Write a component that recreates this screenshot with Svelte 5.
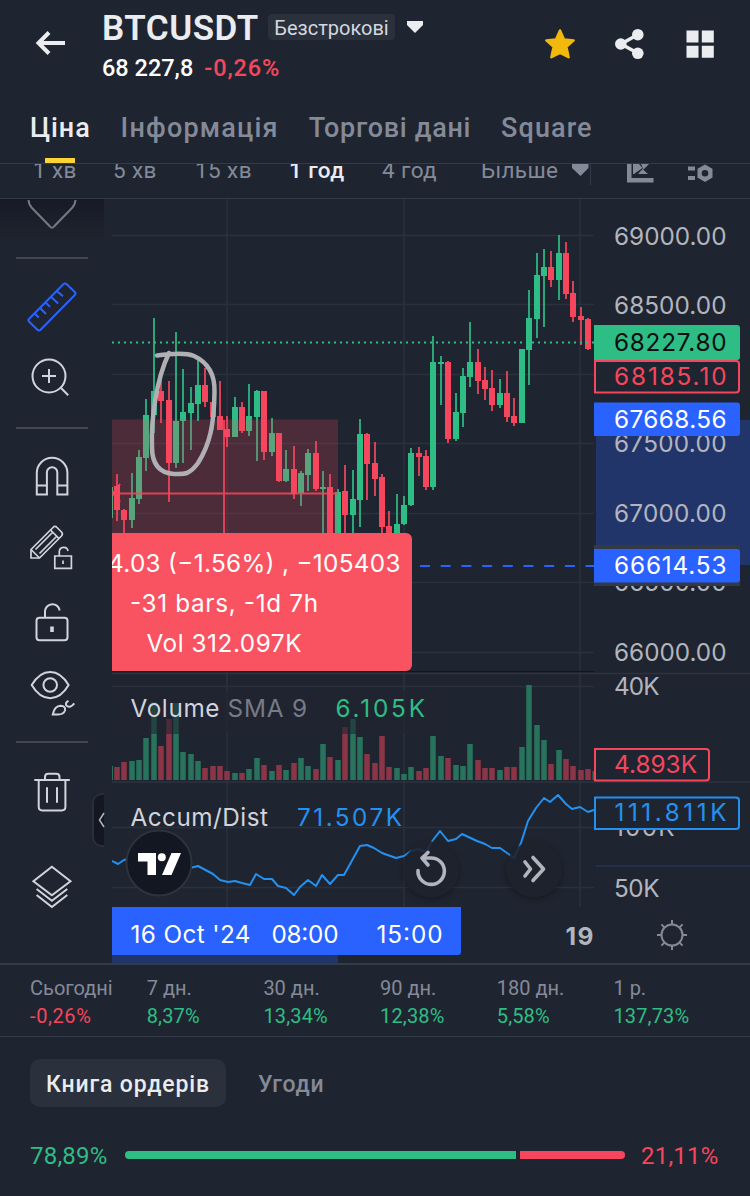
<script lang="ts">
	interface Tool {
		name: string;
		top: number;
		height: number;
		paths: string[];
		divider?: boolean;
	}

	const tabs = [
		{ label: 'Ціна', cls: 't1' },
		{ label: 'Інформація', cls: 't2' },
		{ label: 'Торгові дані', cls: 't3' },
		{ label: 'Square', cls: 't4' }
	];
	const intervals = ['1 хв', '5 хв', '15 хв', '1 год', '4 год'];

	let activeTab = $state('Ціна');
	let activeInterval = $state('1 год');
	let bookTab = $state('book');

	// Each icon is drawn in chart coordinates, top is where its slot starts
	const tools: Tool[] = [
		{
			name: 'scroll', top: 199, height: 58, divider: true,
			paths: ['M28.5 200Q29 205 32 208L50 226.5Q52 229 54 226.5L72 208Q75 205 75.5 200']
		},
		{
			name: 'ruler', top: 259, height: 84,
			paths: [
				'M63.3 284.3Q65 282.8 66.7 284.3L74.8 292Q76.3 293.5 74.8 295L40.6 329.7Q39 331.2 37.4 329.7L29.2 321.8Q27.7 320.3 29.2 318.8Z',
				'M34.8 313.5l4 4M40 308l6 6M45.6 302.5l4.4 4.4M51.2 297l7 6.6M57 291.2l6 5'
			]
		},
		{
			name: 'zoom', top: 343, height: 84, divider: true,
			paths: ['M32.5 376a16.5 16.5 0 1 0 33 0a16.5 16.5 0 1 0-33 0', 'M42 376h14M49 369v14M60.8 387.8l7.4 7.4']
		},
		{
			name: 'magnet', top: 429, height: 83,
			paths: [
				'M36.8 494.5V473a15.3 15.3 0 0 1 30.6 0V494.5H57.3V472.5a5.2 5.2 0 0 0-10.4 0V494.5Z',
				'M36.8 485.5h10M57.3 485.5h10'
			]
		},
		{
			name: 'draw', top: 512, height: 73,
			paths: [
				'M31 549.5L53 527.5Q55 525.5 57 527.5L61.5 532Q63.3 534 61.5 536L39.5 558H31Z',
				'M31 549.5l8.5 8.5M50.5 530l8.8 8.8M35.5 549.5L52.5 532.5M39.5 553.5L56.5 536.5',
				'M54.8 556h16.6v12.4H54.8ZM59.3 556v-4.5a4.4 4.4 0 0 1 8.7-.5M63 560.5v3.5'
			]
		},
		{
			name: 'lock', top: 585, height: 72,
			paths: [
				'M39.5 617.8h25a3 3 0 0 1 3 3v16.5a3 3 0 0 1-3 3h-25a3 3 0 0 1-3-3v-16.5a3 3 0 0 1 3-3Z',
				'M45 617.5V611a7.4 7.4 0 0 1 14.7-.5M51.2 626.5v5.6M52.8 626.5v5.6'
			]
		},
		{
			name: 'hide', top: 657, height: 84, divider: true,
			paths: [
				'M31.7 685C42 667.5 58.5 667.5 68.6 685C58.5 702.5 42 702.5 31.7 685Z',
				'M43.4 685a6.8 6.8 0 1 0 13.6 0a6.8 6.8 0 1 0-13.6 0',
				'M52.8 714.5Q54.5 706 60.5 705.8Q66 706 65 710.5Q63.5 714.5 58 714.5Z',
				'M68.5 700.8q-3.4 1.6-2.3 4.6q3.6 3.6 8.1-2'
			]
		},
		{
			name: 'trash', top: 743, height: 99,
			paths: [
				'M34.3 780h35.5M45 780v-3q0-3.3 3.3-3.3h7.9q3.3 0 3.3 3.3v3',
				'M38.7 780v26.8q0 3.6 3.6 3.6h19.5q3.6 0 3.6-3.6V780M47 787.3v15.4M57 787.3v15.4'
			]
		},
		{
			name: 'layers', top: 842, height: 121,
			paths: [
				'M51.9 866.8L70.5 881.2L51.9 895.2L33.4 881.2Z',
				'M36.6 889L51.9 900.8L67.3 889M36.6 895L51.9 907L67.3 895'
			]
		}
	];

	// colour, high, body top, body bottom, low
	const candles: [string, number, number, number, number][] = [
		['r', 474, 486, 510, 521], ['r', 509, 510, 520, 533], ['g', 473, 498, 520, 528],
		['g', 450, 457, 499, 504], ['g', 399, 415, 458, 471], ['g', 318, 391, 415, 433],
		['r', 378, 391, 401, 423], ['r', 381, 400, 463, 502], ['g', 332, 421, 463, 468],
		['g', 369, 412, 421, 463], ['g', 387, 403, 413, 450], ['g', 360, 385, 404, 421],
		['r', 368, 385, 402, 407], ['r', 400, 402, 417, 430], ['r', 381, 416, 430, 430],
		['r', 416, 429, 437, 447], ['g', 397, 407, 437, 437], ['r', 402, 407, 431, 433],
		['g', 384, 416, 431, 436], ['g', 390, 391, 417, 461], ['r', 391, 391, 452, 460],
		['g', 418, 433, 452, 456], ['r', 433, 433, 481, 482], ['g', 450, 469, 481, 482],
		['r', 446, 469, 494, 499], ['g', 471, 473, 493, 506], ['g', 449, 453, 475, 491],
		['r', 441, 453, 489, 491], ['g', 471, 487, 489, 534], ['r', 474, 487, 534, 534],
		['g', 489, 492, 534, 534], ['r', 465, 491, 515, 534], ['g', 470, 499, 515, 534],
		['g', 419, 434, 500, 527], ['r', 433, 434, 464, 500], ['r', 442, 463, 479, 496],
		['r', 474, 477, 527, 534], ['r', 511, 526, 534, 534], ['g', 494, 524, 534, 534],
		['g', 496, 505, 524, 525], ['g', 448, 453, 505, 506], ['r', 447, 453, 457, 476],
		['r', 450, 456, 487, 490], ['g', 336, 362, 487, 490], ['g', 356, 362, 364, 405],
		['r', 361, 362, 439, 443], ['g', 393, 412, 439, 441], ['g', 368, 376, 413, 427],
		['g', 322, 362, 377, 387], ['r', 349, 362, 381, 394], ['r', 367, 380, 389, 400],
		['r', 370, 388, 405, 411], ['g', 379, 393, 405, 408], ['r', 371, 393, 417, 422],
		['r', 398, 416, 423, 426], ['g', 349, 349, 423, 423], ['g', 290, 318, 350, 385],
		['g', 253, 275, 319, 338], ['g', 249, 267, 276, 327], ['r', 251, 267, 280, 287],
		['g', 235, 253, 280, 300], ['r', 242, 253, 294, 299], ['r', 281, 293, 317, 322],
		['r', 307, 316, 320, 345], ['r', 318, 319, 349, 350]
	];

	const volumeTops = [
		767, 762, 761, 760, 738, 702, 746, 719, 703, 752, 754, 761, 768, 766, 766, 771, 773, 773, 769, 758,
		765, 771, 765, 770, 763, 758, 766, 769, 744, 757, 760, 727, 719, 737, 754, 763, 736, 767, 768, 774,
		767, 771, 768, 736, 756, 758, 765, 766, 744, 760, 768, 768, 770, 767, 767, 747, 685, 725, 740, 764,
		750, 759, 766, 770, 769
	];

	const barX = (i: number) => Math.round(117 + i * 7.36);

	const accum =
		'112,861 118,864 124,860 132,858 150,866 160,872 175,872 190,868 198,866 213,874 220,880 228,882 235,881 242,883 250,885 256,874 264,879 272,879 278,886 286,888 294,895 300,887 308,880 316,886 322,875 330,884 338,875 344,875 360,846 367,845 374,848 382,853 396,858 404,856 411,851 418,849 426,852 433,840 440,831 448,841 456,839 462,834 477,841 485,844 492,848 500,848 514,858 521,843 528,821 536,808 544,798 550,802 558,795 566,804 572,809 580,807 588,812 594,810';

	const gridY = [235, 304, 374, 443, 513, 582, 652, 686, 827, 887];
	const gridX = [227, 404, 580];

	const prices = [
		{ y: 244.5, text: '69000.00' },
		{ y: 313.5, text: '68500.00' },
		{ y: 452, text: '67500.00' },
		{ y: 522, text: '67000.00' },
		{ y: 591, text: '66500.00' },
		{ y: 660.5, text: '66000.00' }
	];

	const stats = [
		{ label: 'Сьогодні', value: '-0,26%' },
		{ label: '7 дн.', value: '8,37%' },
		{ label: '30 дн.', value: '13,34%' },
		{ label: '90 дн.', value: '12,38%' },
		{ label: '180 дн.', value: '5,58%' },
		{ label: '1 р.', value: '137,73%' }
	];

	const buyShare = 78.89;
</script>

<div class="screen">
	<header class="header">
		<svg class="back" width="32" height="28" viewBox="35 29 32 28">
			<path d="M49 32.5L38.5 43L49 53.5M38.5 43H65" fill="none" stroke="#eaecef" stroke-width="4" />
		</svg>
		<div class="pair">
			<div class="pair-row">
				<span class="symbol">BTCUSDT</span>
				<span class="badge">Безстрокові</span>
				<svg class="caret" width="16" height="12" viewBox="0 0 16 12"><path d="M0 0H16V4L8 12L0 4Z" fill="#eaecef" /></svg>
			</div>
			<div class="price-row">
				<span class="last">68 227,8</span>
				<span class="change">-0,26%</span>
			</div>
		</div>
		<svg class="actions" width="170" height="32" viewBox="545 28 170 32">
			<path
				d="M560 30.5L564 39.4L573.6 40.4L566.4 46.8L568.6 57.2L560 52.8L551.4 57.2L553.6 46.8L546.4 40.4L556 39.4Z"
				fill="#f0b90b" stroke="#f0b90b" stroke-width="2.5" stroke-linejoin="round"
			/>
			<g fill="#eaecef" stroke="#eaecef">
				<path d="M638 34.5L621 44L638 53.3" fill="none" stroke-width="3.5" />
				<circle cx="620.8" cy="44" r="5.8" stroke="none" />
				<circle cx="637.8" cy="34.7" r="5.8" stroke="none" />
				<circle cx="637.8" cy="53.3" r="5.8" stroke="none" />
			</g>
			<path d="M686.5 30.5h12v12h-12zM701.8 30.5h12v12h-12zM686.5 45.8h12v12h-12zM701.8 45.8h12v12h-12z" fill="#eaecef" />
		</svg>
	</header>

	<nav class="tabs">
		{#each tabs as tab}
			<button class="tab {tab.cls}" class:active={activeTab === tab.label} onclick={() => (activeTab = tab.label)}>
				{tab.label}
			</button>
		{/each}
	</nav>

	<div class="intervals">
		{#each intervals as item, i}
			<button class="interval i{i}" class:active={activeInterval === item} onclick={() => (activeInterval = item)}>
				{item}
			</button>
		{/each}
		<button class="interval more">Більше</button>
		<svg class="interval-icons" width="142" height="34" viewBox="571 164 142 34">
			<g fill="#848a98">
				<path d="M572 160H588.5V168L580.5 176L572 168Z" />
				<path d="M627 160h4.5v18h22v4.5H627z" />
				<path d="M633 164h6l3.5 4L634 174h-1zM641 164h8l-5.5 5.5zM638 174l4.5-5l5.5 5z" />
				<path d="M688 166.5h7v4h-7zM688 176h7v4h-7z" />
				<path fill-rule="evenodd" d="M705 164.5l7.5 4.2v8.8L705 182l-7.5-4.5v-8.8zM705 170a3.3 3.3 0 1 0 0 6.6a3.3 3.3 0 1 0 0-6.6z" />
			</g>
			<path d="M590.5 164v21" stroke="#333b47" />
		</svg>
	</div>

	<main class="main">
		<aside class="toolbar">
			{#each tools as tool}
				<svg class="tool {tool.name}" width="104" height={tool.height} viewBox="0 {tool.top} 104 {tool.height}">
					{#each tool.paths as d}
						<path {d} />
					{/each}
				</svg>
				{#if tool.divider}
					<div class="divider"></div>
				{/if}
			{/each}
			<button class="collapse" aria-label="Collapse">
				<svg width="8" height="16" viewBox="0 0 8 16"><path d="M7 1L2.5 8L7 15" /></svg>
			</button>
		</aside>

		<svg class="chart" width="646" height="764" viewBox="104 199 646 764">
			<defs>
				<clipPath id="plot"><rect x="112" y="199" width="482" height="764" /></clipPath>
			</defs>

			<g class="grid">
				{#each gridY as y}
					<path d="M112 {y}.5H594" />
				{/each}
				{#each gridX as x}
					<path d="M{x} 199V907" />
				{/each}
			</g>
			<path d="M112 671.5H594" stroke="#11151d" />
			<path d="M112 673.5H750M112 782H750" stroke="#2d333e" stroke-width="1.5" />

			<g clip-path="url(#plot)">
				<rect x="110" y="487" width="3" height="31" fill="#2ebd85" />
				{#each candles as [color, high, top, bottom, low], i}
					<g class={color}>
						<rect class="wick" x={barX(i) - 1} y={high} width="2" height={low - high} />
						<rect x={barX(i) - 3} y={top} width="6" height={Math.max(bottom - top, 2)} />
					</g>
				{/each}
				<g class="volume">
					<rect class="g" x="110" y="766" width="3" height="14" />
					{#each volumeTops as top, i}
						<rect class={candles[i][0]} x={barX(i) - 2.75} y={top} width="5.5" height={780 - top} />
					{/each}
					<rect class="g" x="592.5" y="771" width="2" height="9" />
				</g>
				<rect x="120" y="690" width="315" height="44" fill="#1f2530" opacity="0.6" />
				<path d="M112 342.5H594" stroke="#2ebd85" stroke-width="2" stroke-dasharray="2 4" />

				<!-- measured range -->
				<rect x="112" y="419.5" width="226" height="114" fill="#f6465d" opacity="0.21" />
				<path d="M112 493.5H338M224 420V533" stroke="#f6465d" stroke-width="2" opacity="0.85" />
				<path d="M120 484L113 493.5L120 502" fill="none" stroke="#f6465d" stroke-width="2" />
				<path d="M420 566H594" stroke="#2962ff" stroke-width="2" stroke-dasharray="10 10.7" />

				<path
					class="scribble"
					d="M157 355.5C175 353 187 353 194 356C209 363 215 375 214.5 392C214 425 210 444 198 463C190 474 185 474.5 174 474C158 473 152 462 152 447C151 420 156 380 169 353"
				/>

				<rect x="104" y="533" width="308" height="138" rx="6" fill="#f95361" />
				<g class="label white">
					<text x="108" y="571.5" textLength="292.5">4.03 (−1.56%) , −105403</text>
					<text x="130" y="611.5" textLength="188">-31 bars, -1d 7h</text>
					<text x="146.5" y="651.5" textLength="155">Vol 312.097K</text>
				</g>

				<polyline points={accum} fill="none" stroke="#2490ef" stroke-width="2" stroke-linejoin="round" />
			</g>

			<g class="label">
				<text x="130.5" y="717" textLength="89" fill="#d1d4dc">Volume</text>
				<text x="227.5" y="717" textLength="79.5" fill="#787b86">SMA 9</text>
				<text x="335.5" y="717" textLength="89.5" fill="#2ebd85">6.105K</text>
				<text x="130.5" y="826" textLength="137.5" fill="#d1d4dc">Accum/Dist</text>
				<text x="297" y="826" textLength="105" fill="#2490ef">71.507K</text>
			</g>

			<!-- price scale -->
			<rect x="596" y="420" width="154" height="145" fill="#22356a" />
			<g class="label axis">
				{#each prices as p}
					<text x="614" y={p.y} textLength="112.5">{p.text}</text>
				{/each}
				<text x="614" y="694.5" textLength="45.5">40K</text>
				<text x="614" y="835.5" textLength="60.5">100K</text>
				<text x="614" y="896.5" textLength="45.5">50K</text>
			</g>
			<path d="M596 866H750" stroke="#253559" stroke-width="1.5" />
			<path d="M594 325H737q3 0 3 3V357q0 3-3 3H594Z" fill="#2ebd85" />
			<path d="M595 361H736q3 0 3 3V389.5q0 3-3 3H595Z" fill="#1f2530" stroke="#f6465d" stroke-width="2" />
			<path d="M594 402.5H737q3 0 3 3V433q0 3-3 3H594Z" fill="#2962ff" />
			<path d="M594 545H740V586H594Z" fill="#343943" />
			<path d="M594 549H737q3 0 3 3V579.5q0 3-3 3H594Z" fill="#2962ff" />
			<path d="M595 749H706q3 0 3 3V777.5q0 3-3 3H595Z" fill="#1f2530" stroke="#f6465d" stroke-width="2" />
			<path d="M595 797.5H736q3 0 3 3V826q0 3-3 3H595Z" fill="#1f2530" stroke="#2490ef" stroke-width="2" />
			<g class="label">
				<text x="614" y="350.5" textLength="112.5" fill="#0b0e11">68227.80</text>
				<text x="614" y="385" textLength="112.5" fill="#f6465d">68185.10</text>
				<text x="614" y="428" textLength="112.5" fill="#fff">67668.56</text>
				<text x="614" y="574" textLength="112.5" fill="#fff">66614.53</text>
				<text x="614" y="773" textLength="83" fill="#f6465d">4.893K</text>
				<text x="614.5" y="821" textLength="112" fill="#2490ef">111.811K</text>
			</g>

			<!-- time scale -->
			<path d="M112 955H338V963H112Z" fill="#22356a" />
			<path d="M112 907H461V952q0 3-3 3H112Z" fill="#2962ff" />
			<g class="label white">
				<text x="130.5" y="943" textLength="120">16 Oct '24</text>
				<text x="271.5" y="943" textLength="67">08:00</text>
				<text x="376.5" y="943" textLength="66">15:00</text>
			</g>
			<text class="day" x="565.5" y="945">19</text>
			<g fill="none" stroke="#868993" stroke-width="2">
				<circle cx="672" cy="935" r="10.5" />
				<path d="M672 920v4.5M672 945.5v4.5M657 935h4.5M682.5 935h4.5M661.4 924.4l3.2 3.2M679.4 942.4l3.2 3.2M661.4 945.6l3.2-3.2M679.4 927.6l3.2-3.2" />
			</g>

			<circle cx="159" cy="863" r="32.5" fill="#131722" stroke="#2e323d" stroke-width="2" />
			<path d="M138 853H156V875H147.5V861.5H138ZM171.5 853H181L171.5 875H162Z" fill="#fff" />
			<circle cx="161.8" cy="857.2" r="4" fill="#fff" />

			<g class="floating">
				<circle cx="431" cy="869.5" r="28" />
				<circle cx="534" cy="869.5" r="28" />
				<path d="M418 870.5A13.2 13.2 0 1 0 431 858H422M428 852.5L422 858L428 865" />
				<path d="M525 862L530.5 869L525 876M533 857.5L543.5 869L533 880.5" />
			</g>
		</svg>
	</main>

	<section class="stats">
		{#each stats as s}
			<div class="stat">
				<span class="stat-label">{s.label}</span>
				<span class="stat-value" class:down={s.value.startsWith('-')}>{s.value}</span>
			</div>
		{/each}
	</section>

	<section class="book">
		<div class="book-tabs">
			<button class="book-tab" class:active={bookTab === 'book'} onclick={() => (bookTab = 'book')}>Книга ордерів</button>
			<button class="book-tab" class:active={bookTab === 'trades'} onclick={() => (bookTab = 'trades')}>Угоди</button>
		</div>
		<div class="ratio">
			<span class="buy">78,89%</span>
			<div class="ratio-bar">
				<div class="buy-bar" style="flex-grow: {buyShare}"></div>
				<div class="sell-bar" style="flex-grow: {100 - buyShare}"></div>
			</div>
			<span class="sell">21,11%</span>
		</div>
	</section>
</div>

<style>
	:global(body) {
		background: #1f2530;
	}

	.screen {
		width: 750px;
		height: 1196px;
		display: flex;
		flex-direction: column;
		overflow: hidden;
		background: #1f2530;
		color: #eaecef;
		font-family: Roboto, 'Noto Sans', sans-serif;
	}

	button {
		padding: 0;
		border: none;
		background: none;
		color: inherit;
		font: inherit;
		white-space: nowrap;
	}

	svg {
		display: block;
		flex: none;
	}

	.header {
		display: flex;
		height: 98px;
		padding: 0 35px;
	}

	.back {
		margin-top: 29px;
	}

	.pair {
		flex: 1;
		margin-left: 35px;
		padding-top: 8px;
	}

	.pair-row {
		display: flex;
		align-items: center;
		height: 40px;
	}

	.symbol {
		width: 166px;
		padding-top: 1px;
		font-size: 35px;
		font-weight: 600;
		letter-spacing: 0.5px;
	}

	.badge {
		width: 127px;
		height: 26px;
		margin-right: 12px;
		margin-bottom: 2px;
		border-radius: 4px;
		background: #2a303c;
		color: #d5d8de;
		font-size: 20px;
		line-height: 28px;
		text-align: center;
	}

	.caret {
		margin-bottom: 3px;
	}

	.price-row {
		display: flex;
		gap: 11px;
		font-size: 23.5px;
		font-weight: 500;
		line-height: 40px;
	}

	.last {
		color: #fff;
	}

	.change {
		color: #f6465d;
		letter-spacing: 0.9px;
	}

	.actions {
		margin-top: 28px;
	}

	.tabs {
		display: flex;
		gap: 30px;
		height: 65px;
		padding: 0 30px;
		border-bottom: 1px solid #333b47;
	}

	.tab {
		position: relative;
		padding-bottom: 5px;
		line-height: 54px;
		font-size: 27px;
		font-weight: 500;
		color: #848a98;
	}

	.t1 { letter-spacing: 0.9px; }
	.t2 { letter-spacing: 1.2px; }
	.t3 { letter-spacing: 0.7px; }
	.t4 { letter-spacing: 1.1px; }

	.tab.active {
		color: #eaecef;
	}

	.tab.active::after {
		content: '';
		position: absolute;
		left: 15px;
		bottom: 0;
		width: 30px;
		height: 5px;
		background: #fcd535;
	}

	.intervals {
		display: flex;
		height: 34px;
		padding-left: 33px;
		overflow: hidden;
		border-bottom: 1px solid #333b47;
	}

	.interval {
		text-align: left;
		line-height: 13px;
		height: 13px;
		font-size: 22.5px;
		letter-spacing: 0.4px;
		color: #848a98;
	}

	.interval.active {
		color: #eaecef;
		font-weight: 500;
	}

	.i0 { width: 80px; }
	.i1 { width: 82px; }
	.i2 { width: 94px; }
	.i3 { width: 93px; }
	.i4 { width: 99px; }
	.more { width: 90px; }

	.main {
		display: flex;
		height: 764px;
		border-bottom: 2px solid #333b47;
	}

	.toolbar {
		position: relative;
		display: flex;
		flex-direction: column;
		width: 104px;
		background: linear-gradient(#171a26, #1f2530 46px);
	}

	.tool path {
		fill: none;
		stroke: #d1d4dc;
		stroke-width: 2;
	}

	.tool.draw path {
		stroke-width: 1.7;
	}

	.tool.ruler path {
		stroke: #2962ff;
	}

	.tool.scroll path {
		stroke: #767982;
	}

	.divider {
		height: 2px;
		margin: 0 16px;
		background: #434651;
	}

	.collapse {
		position: absolute;
		right: 0;
		top: 594px;
		width: 12px;
		height: 54px;
		padding-left: 3px;
		border: 2px solid #2a2e39;
		border-right: none;
		border-radius: 10px 0 0 10px;
		background: #131722;
	}

	.collapse path {
		fill: none;
		stroke: #b2b5be;
		stroke-width: 1.5;
	}

	.grid path {
		stroke: #2b313c;
		stroke-width: 1.5;
	}

	.r { fill: #f6465d; }
	.g { fill: #2ebd85; }
	.wick { opacity: 0.85; }

	.volume .r { fill: #8b3547; }
	.volume .g { fill: #27735c; }

	.label {
		font-family: Inter, sans-serif;
		font-size: 24.3px;
	}

	.label.white { fill: #fff; }
	.label.axis { fill: #b2b5be; }

	.day {
		font-family: Inter, sans-serif;
		font-size: 24.5px;
		font-weight: 700;
		letter-spacing: 1.5px;
		fill: #b2b5be;
	}

	.scribble {
		fill: none;
		stroke: #b0afb4;
		stroke-width: 4.5;
		stroke-linecap: round;
	}

	.floating circle {
		fill: #1e222d;
		opacity: 0.88;
		filter: drop-shadow(0 2px 3px rgba(0, 0, 0, 0.4));
	}

	.floating path {
		fill: none;
		stroke: #b2b5be;
		stroke-width: 3.6;
		stroke-linecap: round;
		stroke-linejoin: round;
	}

	.stats {
		display: grid;
		grid-template-columns: repeat(6, 116.7px);
		height: 71px;
		padding-left: 30px;
		border-bottom: 1px solid #333b47;
	}

	.stat {
		display: flex;
		flex-direction: column;
		padding-top: 9px;
		font-size: 20px;
		line-height: 28px;
	}

	.stat-label {
		color: #848a98;
	}

	.stat-value {
		color: #2ebd85;
		letter-spacing: 0.15px;
	}

	.stat-value.down {
		color: #f6465d;
		letter-spacing: 0.6px;
	}

	.book {
		padding: 22px 30px 0;
	}

	.book-tabs {
		display: flex;
		gap: 16px;
	}

	.book-tab {
		height: 48px;
		padding: 2px 16px 0;
		border-radius: 10px;
		font-size: 23px;
		font-weight: 500;
		letter-spacing: 0.85px;
		color: #848a98;
	}

	.book-tab.active {
		background: #2a303c;
		color: #eaecef;
	}

	.ratio {
		display: flex;
		align-items: center;
		height: 40px;
		margin-top: 28px;
		font-size: 24px;
		letter-spacing: 0.2px;
	}

	.ratio span {
		padding-top: 2px;
	}

	.buy {
		width: 95px;
		color: #2ebd85;
	}

	.sell {
		margin-left: 16px;
		color: #f6465d;
	}

	.ratio-bar {
		display: flex;
		gap: 4px;
		width: 500px;
		height: 8px;
		border-radius: 4px;
		overflow: hidden;
	}

	.buy-bar {
		background: #2ebd85;
	}

	.sell-bar {
		background: #f6465d;
	}
</style>
